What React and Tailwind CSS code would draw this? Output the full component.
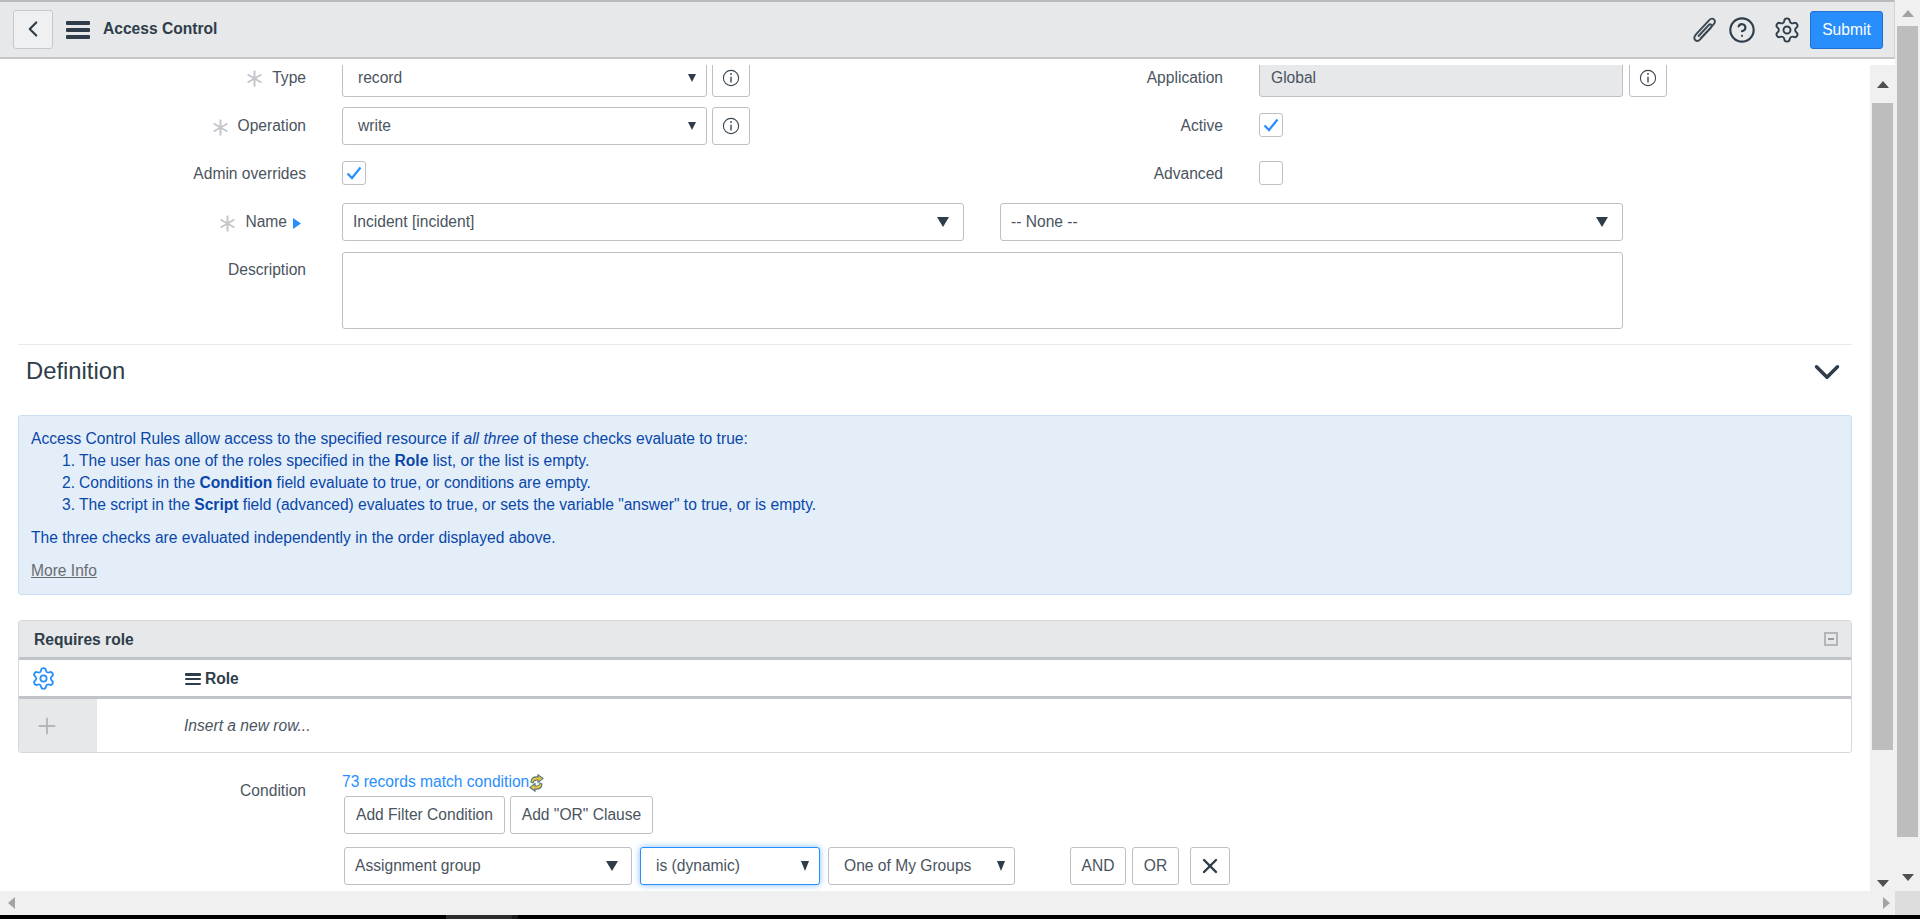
import { ChevronLeft, ChevronDown, CircleHelp, Settings, X, Plus } from "lucide-react";

const border = "border border-[#bdc0c4] rounded-[3px]";

const Star = () => (
    <svg width="17" height="17" viewBox="0 0 17 17" className="shrink-0 mt-[2px]" stroke="#c3c6ca" strokeWidth="2">
        <path d="M8.5 0.5V16.5M1.6 4.5L15.4 12.5M15.4 4.5L1.6 12.5" />
    </svg>
);

const Arrow = ({ w = 8, h = 8, color = "#2e3d49" }) => (
    <svg width={w} height={h} viewBox="0 0 10 10" preserveAspectRatio="none" className="shrink-0">
        <path d="M0 0H10L5 10Z" fill={color} />
    </svg>
);

const Check = ({ on }) => (
    <div className={`w-[24px] h-[24px] ${border} bg-white flex items-center justify-center`}>
        {on && (
            <svg width="16" height="14" viewBox="0 0 16 14" fill="none" stroke="#278efc" strokeWidth="2.2">
                <path d="M1.5 7.5L6 12L14.5 1.5" />
            </svg>
        )}
    </div>
);

const InfoBtn = ({ className = "" }) => (
    <div className={`w-[38px] ${border} bg-white flex items-center justify-center ${className}`}>
        <svg width="18" height="18" viewBox="0 0 18 18" fill="none" stroke="#3c4650" strokeWidth="1.1">
            <circle cx="9" cy="9" r="7.6" />
            <path d="M9 7.8V13.4" strokeWidth="1.4" />
            <circle cx="9" cy="5" r="0.9" fill="#3c4650" stroke="none" />
        </svg>
    </div>
);

const Select = ({ text, className = "", pad = "pl-[15px]", arrow = <Arrow />, right = "pr-[10px]" }) => (
    <div className={`h-full ${border} bg-white flex items-center justify-between ${pad} ${right} text-[#4a545e] ${className}`}>
        <span>{text}</span>
        {arrow}
    </div>
);

const Label = ({ children, required, width = "w-[306px]", className = "" }) => (
    <div className={`${width} shrink-0 flex items-center justify-end gap-[9px] text-[#4a545e] ${className}`}>
        {required && <Star />}
        <span>{children}</span>
    </div>
);

const Clip = () => (
    <svg width="26" height="26" viewBox="0 0 26 26" fill="none" stroke="#3a4650" strokeWidth="1.9" strokeLinecap="round">
        <path d="M8.6 21.4L21.6 7.4C23.4 5.4 23.2 3.4 22 2.4C20.8 1.4 18.8 1.4 17 3.4L4 17.4C2.2 19.6 2 22 3.4 23.2C4.8 24.4 6.8 23.8 8.2 22.4L19 10.6C20 9.4 19.8 8.4 19.2 7.8C18.6 7.2 17.4 7.4 16.4 8.4L6.6 19" />
    </svg>
);

const Refresh = () => (
    <svg width="15" height="18" viewBox="0 0 15 18" className="shrink-0 mt-[3px]">
        <path d="M2 8C2 4 5 2.5 9 3V0.8L14 4.6L9 8.4V6C6 5.8 4.6 6.4 4 9Z" fill="#e3c93c" stroke="#56707c" strokeWidth="1.1" />
        <path d="M13 10C13 14 10 15.5 6 15V17.2L1 13.4L6 9.6V12C9 12.2 10.4 11.6 11 9Z" fill="#e3c93c" stroke="#56707c" strokeWidth="1.1" />
    </svg>
);

const Menu = ({ w, h, bar }) => (
    <div className="flex flex-col justify-between" style={{ width: w, height: h }}>
        <div className="bg-[#2e3d49] rounded-[1px]" style={{ height: bar }}></div>
        <div className="bg-[#2e3d49] rounded-[1px]" style={{ height: bar }}></div>
        <div className="bg-[#2e3d49] rounded-[1px]" style={{ height: bar }}></div>
    </div>
);

const Btn = ({ children, className = "" }) => (
    <div className={`h-[38px] ${border} bg-white flex items-center justify-center text-[#4a545e] ${className}`}>{children}</div>
);

export default function App() {
    return (
        <div className="w-[1920px] h-[919px] overflow-hidden flex flex-col bg-black text-[15.6px] leading-[22px] font-['Liberation_Sans',Arial,sans-serif]">
            <div className="h-[915px] flex">
                <div className="w-[1895px] flex flex-col bg-white">
                    {/* header */}
                    <div className="h-[59px] shrink-0 bg-[#e6e8ea] border-t-2 border-b-2 border-t-[#b8bbbe] border-b-[#c4c7ca] border-r border-r-[#d0d2d4] flex items-center pl-[13px] pr-[11px]">
                        <div className="w-[40px] h-[39px] mb-[1px] border border-[#c6c9cc] rounded-[3px] bg-[#eff0f1] flex items-center justify-center">
                            <ChevronLeft size={26} strokeWidth={2} color="#2e3d49" />
                        </div>
                        <div className="ml-[13px]">
                            <Menu w={24} h={18} bar={4} />
                        </div>
                        <div className="ml-[13px] mb-[2px] font-bold text-[#2e3d49]">Access Control</div>
                        <div className="ml-auto flex items-center">
                            <Clip />
                            <CircleHelp size={28} strokeWidth={1.8} color="#2e3d49" className="ml-[10px]" />
                            <Settings size={28} strokeWidth={1.6} color="#2e3d49" className="ml-[17px]" />
                            <div className="ml-[9px] w-[73px] h-[38px] bg-[#278efc] border border-[#1f6fd0] rounded-[3px] text-white flex items-center justify-center">Submit</div>
                        </div>
                    </div>
                    <div className="h-[6px] shrink-0 bg-white"></div>

                    <div className="flex-1 flex min-h-0">
                        {/* form */}
                        <div className="w-[1870px] overflow-hidden">
                            <div className="-mt-[7px]">
                                <div className="flex h-[39px]">
                                    <Label required>Type</Label>
                                    <Select text="record" className="ml-[36px] w-[365px]" />
                                    <InfoBtn className="ml-[5px]" />
                                    <Label width="w-[473px]">Application</Label>
                                    <div className={`ml-[36px] w-[364px] ${border} bg-[#e6e8ea] flex items-center pl-[11px] text-[#4a545e]`}>Global</div>
                                    <InfoBtn className="ml-[6px]" />
                                </div>
                                <div className="flex h-[38px] mt-[10px]">
                                    <Label required>Operation</Label>
                                    <Select text="write" className="ml-[36px] w-[365px]" />
                                    <InfoBtn className="ml-[5px]" />
                                    <Label width="w-[473px]">Active</Label>
                                    <div className="ml-[36px] pt-[6px]"><Check on /></div>
                                </div>
                                <div className="flex h-[24px] mt-[16px]">
                                    <Label className="pt-[2px]">Admin overrides</Label>
                                    <div className="ml-[36px]"><Check on /></div>
                                    <div className="w-[384px]"></div>
                                    <Label width="w-[473px]" className="pt-[2px]">Advanced</Label>
                                    <div className="ml-[36px]"><Check /></div>
                                </div>
                                <div className="flex h-[38px] mt-[18px]">
                                    <div className="w-[306px] shrink-0 flex items-center justify-end text-[#4a545e]">
                                        <Star />
                                        <span className="ml-[9px]">Name</span>
                                        <svg width="8" height="11" viewBox="0 0 8 11" className="ml-[6px] mr-[5px] mt-[2px]"><path d="M0 0L8 5.5L0 11Z" fill="#278efc" /></svg>
                                    </div>
                                    <Select text="Incident [incident]" pad="pl-[10px]" right="pr-[14px]" className="ml-[36px] w-[622px]" arrow={<Arrow w={12} h={10} />} />
                                    <Select text="-- None --" pad="pl-[10px]" right="pr-[14px]" className="ml-[36px] w-[623px]" arrow={<Arrow w={12} h={10} />} />
                                </div>
                                <div className="flex mt-[11px]">
                                    <div className="w-[306px] shrink-0 pt-[7px] text-right text-[#4a545e]">Description</div>
                                    <div className={`ml-[36px] w-[1281px] h-[77px] ${border} bg-white`}></div>
                                </div>

                                {/* definition */}
                                <div className="ml-[18px] w-[1834px] mt-[15px] border-t border-[#e8e9eb] h-[54px] flex items-center justify-between pl-[8px] pr-[4px]">
                                    <span className="text-[23.8px] text-[#2e3d49] mb-[2px]">Definition</span>
                                    <ChevronDown size={42} strokeWidth={2} color="#2e3d49" />
                                </div>
                                <div className="ml-[18px] w-[1834px] mt-[17px] h-[180px] bg-[#e3eef9] border border-[#c9def5] rounded-[3px] pl-[12px] pt-[12px] text-[#0a47a9]">
                                    <div>Access Control Rules allow access to the specified resource if <i>all three</i> of these checks evaluate to true:</div>
                                    <div className="pl-[31px]">
                                        <div className="flex"><span className="w-[17px]">1.</span><span>The user has one of the roles specified in the <b>Role</b> list, or the list is empty.</span></div>
                                        <div className="flex"><span className="w-[17px]">2.</span><span>Conditions in the <b>Condition</b> field evaluate to true, or conditions are empty.</span></div>
                                        <div className="flex"><span className="w-[17px]">3.</span><span>The script in the <b>Script</b> field (advanced) evaluates to true, or sets the variable "answer" to true, or is empty.</span></div>
                                    </div>
                                    <div className="mt-[11px]">The three checks are evaluated independently in the order displayed above.</div>
                                    <div className="mt-[11px] text-[#6a6d70] underline">More Info</div>
                                </div>

                                {/* requires role */}
                                <div className="ml-[18px] w-[1834px] mt-[25px] h-[133px] border border-[#d6d8da] rounded-[3px] flex flex-col">
                                    <div className="h-[39px] bg-[#e6e8ea] border-b-[3px] border-[#c0c4c8] flex items-center justify-between pl-[15px] pr-[13px]">
                                        <span className="font-bold text-[#2e3d49] mt-[2px]">Requires role</span>
                                        <div className="w-[14px] h-[14px] border-2 border-[#b4b7ba] flex items-center justify-center">
                                            <div className="w-[6px] h-[2px] bg-[#9a9da0]"></div>
                                        </div>
                                    </div>
                                    <div className="h-[39px] border-b-[3px] border-[#c0c4c8] flex items-center">
                                        <Settings size={25} strokeWidth={1.7} color="#278efc" className="ml-[12px]" />
                                        <div className="ml-[129px] mt-[2px] flex items-center gap-[4px] font-bold text-[#2e3d49]">
                                            <Menu w={16} h={12} bar={2.5} />
                                            <span>Role</span>
                                        </div>
                                    </div>
                                    <div className="flex-1 flex items-center">
                                        <div className="w-[78px] h-full bg-[#e6e8ea] flex items-center pl-[15px]">
                                            <Plus size={26} strokeWidth={1.8} color="#b4b7ba" />
                                        </div>
                                        <i className="ml-[87px] text-[#4a545e]">Insert a new row...</i>
                                    </div>
                                </div>

                                {/* condition */}
                                <div className="flex mt-[18px]">
                                    <div className="w-[306px] shrink-0 pt-[9px] text-right text-[#4a545e]">Condition</div>
                                    <div className="ml-[36px]">
                                        <div className="flex h-[22px]">
                                            <span className="text-[#278efc]">73 records match condition</span>
                                            <Refresh />
                                        </div>
                                        <div className="ml-[2px] mt-[3px] flex gap-[5px]">
                                            <Btn className="w-[161px]">Add Filter Condition</Btn>
                                            <Btn className="w-[143px]">Add "OR" Clause</Btn>
                                        </div>
                                        <div className="ml-[2px] mt-[13px] h-[38px] flex">
                                            <Select text="Assignment group" pad="pl-[10px]" right="pr-[13px]" className="w-[288px]" arrow={<Arrow w={12} h={10} />} />
                                            <div className="ml-[8px] w-[180px] h-full border border-[#278efc] rounded-[3px] bg-white shadow-[0_0_6px_#7fbcff] flex items-center justify-between pl-[15px] pr-[10px] text-[#4a545e]">
                                                <span>is (dynamic)</span><Arrow w={8} h={10} />
                                            </div>
                                            <Select text="One of My Groups" right="pr-[9px]" className="ml-[8px] w-[187px]" arrow={<Arrow w={8} h={10} />} />
                                            <Btn className="ml-[55px] w-[56px]">AND</Btn>
                                            <Btn className="ml-[6px] w-[47px]">OR</Btn>
                                            <Btn className="ml-[11px] w-[40px]"><X size={24} strokeWidth={2.4} color="#2e3d49" /></Btn>
                                        </div>
                                    </div>
                                </div>
                            </div>
                        </div>

                        {/* inner scrollbar */}
                        <div className="w-[25px] bg-[#f0f0f0] flex flex-col items-center">
                            <div className="h-[38px] shrink-0 flex items-center justify-center"><svg width="12" height="7" viewBox="0 0 12 7"><path d="M0 7L6 0L12 7Z" fill="#505050" /></svg></div>
                            <div className="w-[21px] h-[647px] shrink-0 bg-[#bdbdbd] -ml-[1px]"></div>
                            <div className="mt-[130px] flex items-center justify-center"><svg width="12" height="7" viewBox="0 0 12 7"><path d="M0 0L12 0L6 7Z" fill="#505050" /></svg></div>
                        </div>
                    </div>

                    {/* horizontal scrollbar */}
                    <div className="h-[24px] shrink-0 bg-[#f0f0f0] flex items-center justify-between pl-[8px] pr-[5px]">
                        <svg width="7" height="12" viewBox="0 0 7 12"><path d="M7 0L0 6L7 12Z" fill="#a3a3a3" /></svg>
                        <svg width="7" height="12" viewBox="0 0 7 12"><path d="M0 0L7 6L0 12Z" fill="#a3a3a3" /></svg>
                    </div>
                </div>

                {/* page scrollbar */}
                <div className="w-[25px] bg-[#f0f0f0] flex flex-col items-center">
                    <div className="h-[26px] shrink-0 flex items-center justify-center"><svg width="12" height="7" viewBox="0 0 12 7"><path d="M0 7L6 0L12 7Z" fill="#a3a3a3" /></svg></div>
                    <div className="w-[21px] h-[811px] shrink-0 bg-[#bdbdbd]"></div>
                    <div className="mt-[37px] flex items-center justify-center"><svg width="12" height="7" viewBox="0 0 12 7"><path d="M0 0L12 0L6 7Z" fill="#505050" /></svg></div>
                    <div className="mt-auto h-[24px] w-full bg-[#dcdcdc]"></div>
                </div>
            </div>
            <div className="h-[4px] flex">
                <div className="ml-[446px] w-[66px] bg-[#2b2b2b]"></div>
                <div className="w-[6px] bg-[#1a1a1a]"></div>
            </div>
        </div>
    );
}
